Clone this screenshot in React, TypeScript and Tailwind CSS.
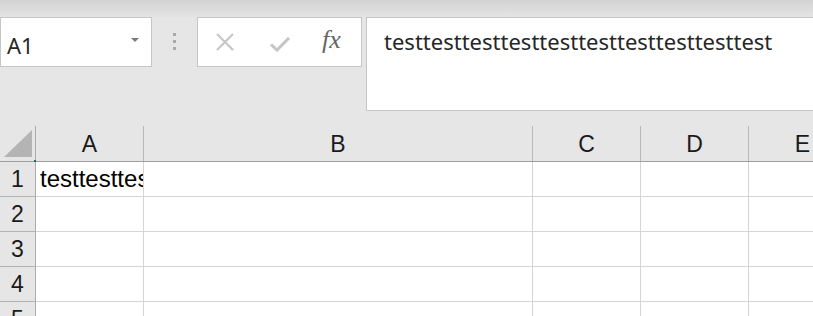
import React from "react";

const cols = [
  { label: "A", w: "w-[108px]" },
  { label: "B", w: "w-[389px]" },
  { label: "C", w: "w-[108px]" },
  { label: "D", w: "w-[108px]" },
  { label: "E", w: "w-[108px]" },
];

const gridFont = { fontFamily: '"Liberation Sans", "Noto Sans CJK JP", sans-serif' };
const uiFont = { fontFamily: '"Noto Sans", "Open Sans", sans-serif' };

export default function App() {
  return (
    <div className="w-[813px] h-[316px] overflow-hidden bg-[#e6e6e6] relative flex flex-col">
      {/* top gradient strip */}
      <div className="h-[17px] shrink-0 bg-gradient-to-b from-[#d3d3d3] to-[#e4e4e4]" />

      {/* formula bar area */}
      <div className="h-[109px] shrink-0 flex items-start">
        {/* Name box */}
        <div className="w-[152px] shrink-0 h-[50px] bg-white border border-[#c6c6c6] flex items-center pl-[6px] pr-[12px] relative">
          <span className="text-[22px] text-[#262626] leading-none mt-[6px]" style={uiFont}>
            A1
          </span>
          <div className="ml-auto w-0 h-0 border-l-[4px] border-r-[4px] border-t-[4px] border-l-transparent border-r-transparent border-t-[#7a7a7a] mt-[-4px]" />
        </div>
        {/* dots */}
        <div className="w-[45px] shrink-0 h-[50px] flex flex-col items-center justify-center gap-[4px] pb-[2px]">
          <div className="w-[3px] h-[3px] bg-[#a9a9a9]" />
          <div className="w-[3px] h-[3px] bg-[#a9a9a9]" />
          <div className="w-[3px] h-[3px] bg-[#a9a9a9]" />
        </div>
        {/* buttons */}
        <div className="w-[165px] shrink-0 h-[50px] bg-white border border-[#c6c6c6] flex items-center">
          <svg className="ml-[18px]" width="18" height="18" viewBox="0 0 18 18">
            <path d="M1 1 L17 17 M17 1 L1 17" stroke="#c4c4c4" strokeWidth="2" fill="none" />
          </svg>
          <svg className="ml-[36px] mt-[4px]" width="20" height="15" viewBox="0 0 20 15">
            <path d="M1 7.5 L7 13 L19 1" stroke="#c4c4c4" strokeWidth="3" fill="none" />
          </svg>
          <span
            className="ml-[32px] mb-[4px] text-[26px] italic text-[#666666] leading-none"
            style={{ fontFamily: '"Liberation Serif", "DejaVu Serif", serif' }}
          >
            fx
          </span>
        </div>
        {/* formula input */}
        <div className="ml-[4px] flex-1 h-[94px] bg-white border border-[#c6c6c6] border-r-0 pl-[17px] pt-[9px]">
          <span className="text-[22px] text-[#262626] leading-[28px]" style={uiFont}>
            testtesttesttesttesttesttesttesttesttest
          </span>
        </div>
      </div>

      {/* grid */}
      <div className="flex-1 flex flex-col relative overflow-hidden" style={gridFont}>
        {/* column headers */}
        <div className="h-[36px] shrink-0 flex border-b border-[#9f9f9f]">
          <div className="w-[36px] shrink-0 border-r border-[#ababab] relative">
            <svg className="absolute left-[4px] top-[4px]" width="28" height="28" viewBox="0 0 28 28">
              <path d="M28 0 L28 27 L0 27 Z" fill="#b4b4b4" />
            </svg>
          </div>
          {cols.map((c) => (
            <div
              key={c.label}
              className={`${c.w} shrink-0 border-r border-[#b9b9b9] flex items-center justify-center text-[23px] text-[#1a1a1a] pt-[1px]`}
            >
              {c.label}
            </div>
          ))}
        </div>
        {/* rows */}
        {[1, 2, 3, 4, 5].map((r) => (
          <div key={r} className="h-[35px] shrink-0 flex bg-white">
            <div className="w-[36px] shrink-0 bg-[#e6e6e6] border-r border-b border-r-[#ababab] border-b-[#b4b4b4] flex items-center justify-center text-[23px] text-[#1a1a1a]">
              {r}
            </div>
            {cols.map((c) => (
              <div
                key={c.label}
                className={`${c.w} shrink-0 border-r border-b border-[#d4d4d4] overflow-hidden whitespace-nowrap flex items-center pl-[4px] text-[24px] text-black`}
              >
                {r === 1 && c.label === "A" ? "testtesttesttesttesttesttesttesttesttest" : ""}
              </div>
            ))}
          </div>
        ))}
        <div className="absolute left-[34px] top-[34px] w-[2px] h-[2px] bg-[#217346]" />
      </div>
    </div>
  );
}
